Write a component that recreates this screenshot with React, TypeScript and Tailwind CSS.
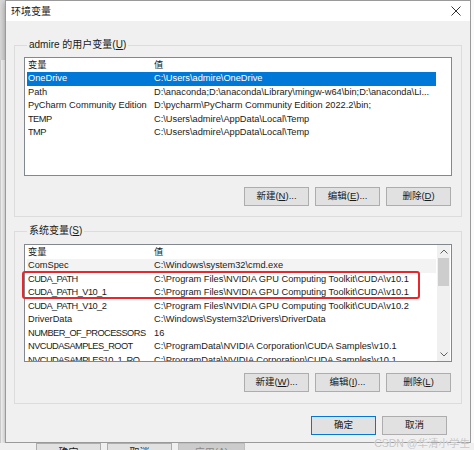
import React from 'react';

const font = { fontFamily: '"Liberation Sans", "Noto Sans CJK SC", sans-serif' };

interface Row {
    name: string;
    value: string;
    selected?: boolean;
    muted?: boolean;
}

const userRows: Row[] = [
    { name: 'OneDrive', value: 'C:\\Users\\admire\\OneDrive', selected: true },
    { name: 'Path', value: 'D:\\anaconda;D:\\anaconda\\Library\\mingw-w64\\bin;D:\\anaconda\\Li...' },
    { name: 'PyCharm Community Edition', value: 'D:\\pycharm\\PyCharm Community Edition 2022.2\\bin;' },
    { name: 'TEMP', value: 'C:\\Users\\admire\\AppData\\Local\\Temp' },
    { name: 'TMP', value: 'C:\\Users\\admire\\AppData\\Local\\Temp' },
];

const systemRows: Row[] = [
    { name: 'ComSpec', value: 'C:\\Windows\\system32\\cmd.exe', muted: true },
    { name: 'CUDA_PATH', value: 'C:\\Program Files\\NVIDIA GPU Computing Toolkit\\CUDA\\v10.1' },
    { name: 'CUDA_PATH_V10_1', value: 'C:\\Program Files\\NVIDIA GPU Computing Toolkit\\CUDA\\v10.1' },
    { name: 'CUDA_PATH_V10_2', value: 'C:\\Program Files\\NVIDIA GPU Computing Toolkit\\CUDA\\v10.2' },
    { name: 'DriverData', value: 'C:\\Windows\\System32\\Drivers\\DriverData' },
    { name: 'NUMBER_OF_PROCESSORS', value: '16' },
    { name: 'NVCUDASAMPLES_ROOT', value: 'C:\\ProgramData\\NVIDIA Corporation\\CUDA Samples\\v10.1' },
    { name: 'NVCUDASAMPLES10_1_RO', value: 'C:\\ProgramData\\NVIDIA Corporation\\CUDA Samples\\v10.1' },
];

function ListRow({ row }: { row: Row }) {
    let cls = 'text-[#1a1a1a]';
    if (row.selected) cls = 'bg-[#0078d7] text-white';
    else if (row.muted) cls = 'bg-[#f3f3f3] text-[#1a1a1a]';
    // all-caps names run narrower in the original UI font
    const caps = /^[A-Z0-9_]+$/.test(row.name);
    return (
        <div className={`ml-[2px] w-[409px] h-[13.5px] grid grid-cols-[126px_1fr] px-[1px] leading-[13.5px] whitespace-nowrap overflow-hidden ${cls}`}>
            <span className={`overflow-hidden ${caps ? 'tracking-[-0.55px]' : ''}`}>{row.name}</span>
            <span>{row.value}</span>
        </div>
    );
}

function WinButton({ label, keyChar, suffix = '', primary = false }: { label: string; keyChar?: string; suffix?: string; primary?: boolean }) {
    return (
        <button
            className={`w-[65px] h-[19px] flex items-center justify-center text-[9.5px] text-[#1a1a1a] bg-[#e1e1e1] border ${primary ? 'border-[#0078d7]' : 'border-[#adadad]'}`}
        >
            {label}
            {keyChar && (
                <>
                    (<span className="underline">{keyChar}</span>){suffix}
                </>
            )}
        </button>
    );
}

function Scrollbar() {
    return (
        <div className="w-[13px] h-full bg-[#f0f0f0] flex flex-col items-center">
            <div className="h-[13px] flex items-center justify-center">
                <svg width="8" height="5" viewBox="0 0 8 5">
                    <path d="M0.5 4.5 L4 1 L7.5 4.5" fill="none" stroke="#606060" strokeWidth="1" />
                </svg>
            </div>
            <div className="w-[11px] h-[28px] bg-[#cdcdcd]" />
            <div className="flex-1" />
            <div className="h-[13px] flex items-center justify-center">
                <svg width="8" height="5" viewBox="0 0 8 5">
                    <path d="M0.5 0.5 L4 4 L7.5 0.5" fill="none" stroke="#606060" strokeWidth="1" />
                </svg>
            </div>
        </div>
    );
}

function Group({ title, keyChar, children }: { title: string; keyChar: string; children: React.ReactNode }) {
    return (
        <fieldset className="mx-[8px] border border-[#dcdcdc] px-[9px]">
            <legend className="ml-[3px] px-[2px] h-[14px] leading-[14px] text-[10px] text-[#1a1a1a]">
                {title}(<span className="underline">{keyChar}</span>)
            </legend>
            {children}
        </fieldset>
    );
}

function ListHeader() {
    return (
        <div className="ml-[2px] h-[13.5px] grid grid-cols-[126px_1fr] px-[1px] leading-[13.5px] text-[#1a1a1a]">
            <span>变量</span>
            <span>值</span>
        </div>
    );
}

export default function App() {
    return (
        <div className="relative w-[474px] h-[450px] overflow-hidden bg-[#f4f4f4] flex flex-col" style={font}>
            <div className="flex h-[443px]">
                {/* background window strip */}
                <div className="w-[5px] flex flex-col bg-[#e6e6e6]">
                    <div className="h-[60px] bg-[#d9d9d9]" />
                    <div className="flex-1 bg-[#f5f5f5] border-l border-[#cfcfcf]" />
                </div>

                {/* dialog */}
                <div className="w-[466px] h-full flex flex-col border border-[#9a9a9a] bg-[#f0f0f0] shadow-[0_2px_6px_rgba(0,0,0,0.35)]">
                    <div className="h-[20px] bg-white flex items-center justify-between pl-[5px] pr-[9px]">
                        <span className="text-[10px] text-[#1a1a1a]">环境变量</span>
                        <svg width="10" height="10" viewBox="0 0 10 10">
                            <path d="M0.5 0.5 L9.5 9.5 M9.5 0.5 L0.5 9.5" stroke="#333" strokeWidth="1" />
                        </svg>
                    </div>

                    <div className="flex-1 flex flex-col pt-[17px] text-[9.25px]">
                        <Group title="admire 的用户变量" keyChar="U">
                            <div className="mt-[5px] h-[119px] bg-white border border-[#828790] pt-[0.5px]">
                                <ListHeader />
                                {userRows.map((r) => (
                                    <ListRow key={r.name} row={r} />
                                ))}
                            </div>
                            <div className="mt-[11px] mb-[10px] flex justify-end gap-[6px] pr-[1px]">
                                <WinButton label="新建" keyChar="N" suffix="..." />
                                <WinButton label="编辑" keyChar="E" suffix="..." />
                                <WinButton label="删除" keyChar="D" />
                            </div>
                        </Group>

                        <div className="h-[7px]" />

                        <Group title="系统变量" keyChar="S">
                            <div className="relative mt-[6px] h-[118px] bg-white border border-[#828790] flex">
                                <div className="flex-1 overflow-hidden pt-[0.5px]">
                                    <ListHeader />
                                    {systemRows.map((r) => (
                                        <ListRow key={r.name} row={r} />
                                    ))}
                                </div>
                                <div className="pr-[1px]">
                                    <Scrollbar />
                                </div>
                                {/* red annotation box */}
                                <div className="absolute left-[-3px] top-[26px] w-[398px] h-[28px] border-2 border-[#e8262b] rounded-[3px]" />
                            </div>
                            <div className="mt-[11px] mb-[11px] flex justify-end gap-[6px] pr-[1px]">
                                <WinButton label="新建" keyChar="W" suffix="..." />
                                <WinButton label="编辑" keyChar="I" suffix="..." />
                                <WinButton label="删除" keyChar="L" />
                            </div>
                        </Group>

                        <div className="mt-[12px] flex justify-end gap-[6px] pr-[23px]">
                            <WinButton label="确定" primary />
                            <WinButton label="取消" />
                        </div>
                    </div>
                </div>
                <div className="flex-1 bg-[#fafafa]" />
            </div>

            {/* background window buttons, partly hidden */}
            <div className="flex-1 flex gap-[6px] pl-[36px] bg-[#f0f0f0] overflow-hidden">
                <div className="w-[65px] h-[19px] bg-[#e1e1e1] border border-[#adadad] text-[10px] text-[#1a1a1a] text-center leading-[17px]">确定</div>
                <div className="w-[65px] h-[19px] bg-[#e1e1e1] border border-[#adadad] text-[10px] text-[#1a1a1a] text-center leading-[17px]">取消</div>
                <div className="w-[67px] h-[19px] bg-[#cccccc] border border-[#bfbfbf] text-[10px] text-[#8a8a8a] text-center leading-[17px]">应用(A)</div>
            </div>

            {/* watermark */}
            <span className="absolute right-[4px] bottom-[0px] text-[10.5px] text-[#c4c4c4] leading-[13px] [text-shadow:0_0_1px_#ffffff]">
                CSDN @华清小学生
            </span>
        </div>
    );
}
